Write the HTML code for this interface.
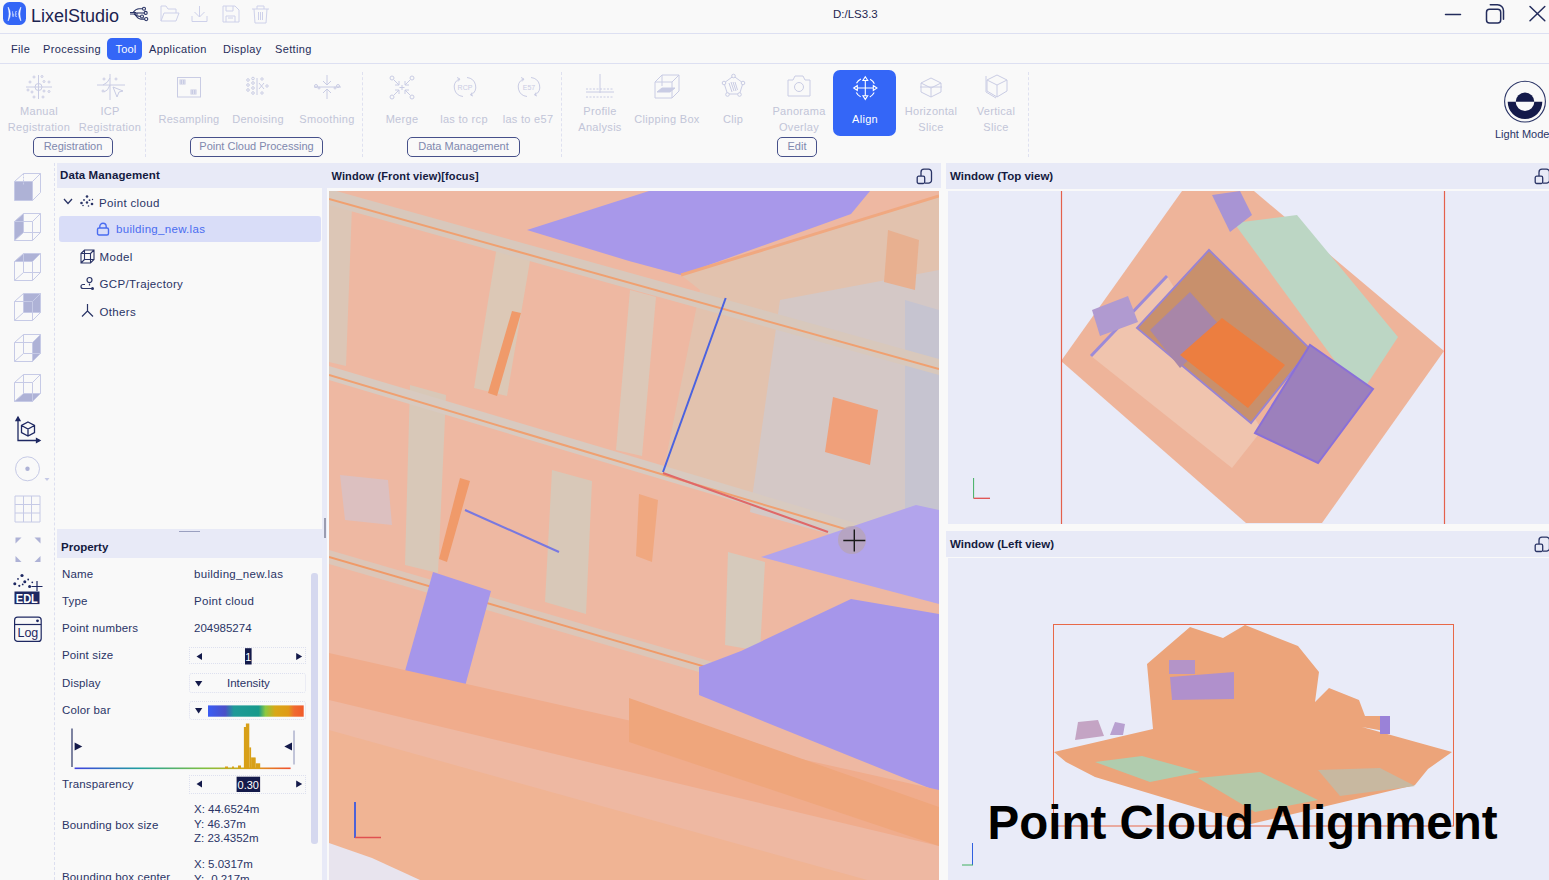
<!DOCTYPE html>
<html><head><meta charset="utf-8">
<style>
html,body{margin:0;padding:0}
body{width:1549px;height:880px;overflow:hidden;background:#f9f9f9;font-family:"Liberation Sans",sans-serif;position:relative;color:#1e2550}
.a{position:absolute;white-space:nowrap;line-height:1}
.dis{color:#c5c8da}
.btn{position:absolute;border:1.5px solid #46508a;border-radius:5px;box-sizing:border-box;font-size:11px;letter-spacing:0;line-height:17.2px;text-align:center;color:#8088ae}
.hdr{position:absolute;background:#e8eaf7}
.tb{position:absolute;font-size:11px;letter-spacing:0.3px;line-height:16px;text-align:center;color:#c2c5d8;white-space:nowrap}
svg{position:absolute;overflow:visible}
</style></head><body>

<!-- ===== Title bar ===== -->
<div class="a" style="left:2.5px;top:1.8px;width:23.6px;height:23.7px;background:#3466f6;border-radius:6.5px"></div>
<div class="a" style="left:31px;top:6.5px;font-size:18px;color:#1c2350">LixelStudio</div>
<div class="a" style="left:833px;top:9px;font-size:11.5px;color:#1e2550">D:/LS3.3</div>

<!-- dotted separators -->
<div class="a" style="left:0;top:33px;width:1549px;height:1px;background:#dde0f2"></div>
<div class="a" style="left:0;top:63px;width:1549px;height:1px;background:#dde0f2"></div>

<!-- ===== Menu ===== -->
<div class="a" style="left:107px;top:38px;width:35px;height:22px;background:#3466f7;border-radius:5px"></div>
<div class="a" style="left:11px;top:44.4px;font-size:11px;letter-spacing:0.35px;color:#262d5a">File</div>
<div class="a" style="left:43px;top:44.4px;font-size:11px;letter-spacing:0.35px;color:#262d5a">Processing</div>
<div class="a" style="left:115.5px;top:44.4px;font-size:11px;letter-spacing:0.2px;color:#fff">Tool</div>
<div class="a" style="left:149px;top:44.4px;font-size:11px;letter-spacing:0.35px;color:#262d5a">Application</div>
<div class="a" style="left:223px;top:44.4px;font-size:11px;letter-spacing:0.35px;color:#262d5a">Display</div>
<div class="a" style="left:275px;top:44.4px;font-size:11px;letter-spacing:0.35px;color:#262d5a">Setting</div>


<!-- logo mark -->
<svg style="left:0;top:0" width="30" height="28" viewBox="0 0 30 28">
<path d="M8.2 7.2Q12.4 14 8.2 20.8Q10.2 14 8.2 7.2z" fill="#fff" stroke="#fff" stroke-width="0.6"/>
<path d="M20.8 7.2Q16.6 14 20.8 20.8Q18.8 14 20.8 7.2z" fill="#fff" stroke="#fff" stroke-width="0.6"/>
<path d="M12.6 11.2v5.2M12.6 14h1.1v2.4h-1.1M15.6 11.6v4.8h1.4M15.6 11.6h1.4M15.6 14h1.2" stroke="#c8d8ff" stroke-width="0.8" fill="none"/>
</svg>
<!-- title bar tool icons -->
<svg style="left:129px;top:5px" width="22" height="20" viewBox="0 0 22 20">
<g stroke="#2a3466" stroke-width="1.1" fill="none">
<path d="M1 7.5h6M1 9h8"/><path d="M4 7.5Q7 3.8 10 3.8h3.5"/><path d="M5 8h10.2"/><path d="M5 9Q8 11.5 11.5 11.5"/><path d="M6 9.5Q9 14.1 12 14.1h3.7"/>
<circle cx="15" cy="3.8" r="1.5"/><circle cx="16.7" cy="7.9" r="1.5"/><circle cx="13" cy="11.5" r="1.5"/><circle cx="17.2" cy="14.1" r="1.6"/>
</g></svg>
<svg style="left:160px;top:5px" width="20" height="18" viewBox="0 0 20 18">
<g stroke="#ced1ea" stroke-width="1" fill="none">
<path d="M1 16V1h5l2 3h8v4"/><path d="M1 16l3-8h15l-3 8z"/>
</g></svg>
<svg style="left:191px;top:5px" width="17" height="18" viewBox="0 0 17 18">
<g stroke="#ced1ea" stroke-width="1" fill="none">
<path d="M8.5 1v11M3.5 7l5 5 5-5"/><path d="M1 11v5.5h15V11"/>
</g></svg>
<svg style="left:222px;top:5px" width="18" height="18" viewBox="0 0 18 18">
<g stroke="#ced1ea" stroke-width="1" fill="none">
<path d="M1 1h12l4 4v12H1z"/><path d="M4 1v5h7V1"/><path d="M4 17v-6h9v6"/><path d="M6 13h5"/>
</g></svg>
<svg style="left:251px;top:4px" width="19" height="20" viewBox="0 0 19 20">
<g stroke="#ced1ea" stroke-width="1" fill="none">
<path d="M1 5h17"/><path d="M6 5V2h7v3"/><path d="M3 5l1 14h11l1-14"/><path d="M7.5 8v8M9.5 8v8M11.5 8v8"/>
</g></svg>
<!-- window controls -->
<svg style="left:1440px;top:0" width="109" height="30" viewBox="0 0 109 30">
<g stroke="#232c5c" stroke-width="1.5" fill="none" stroke-linecap="round">
<path d="M5.5 14.4h15"/>
<rect x="46.5" y="9.2" width="14.2" height="13.8" rx="3"/>
<path d="M50.3 4.8h7.2a6 6 0 0 1 6 6v8.4"/>
<path d="M90 6.5l14.8 14.3M104.8 6.5L90 20.8"/>
</g></svg>


<!-- ===== Toolbar ===== -->
<!-- separators -->
<div class="a" style="left:145px;top:72px;width:0;height:85px;border-left:1px dashed #dfe1f0"></div>
<div class="a" style="left:362px;top:72px;width:0;height:85px;border-left:1px dashed #dfe1f0"></div>
<div class="a" style="left:561px;top:72px;width:0;height:85px;border-left:1px dashed #dfe1f0"></div>
<div class="a" style="left:1028px;top:72px;width:0;height:85px;border-left:1px dashed #dfe1f0"></div>

<!-- labels -->
<div class="tb" style="left:0;top:103px;width:78px">Manual<br>Registration</div>
<div class="tb" style="left:71px;top:103px;width:78px">ICP<br>Registration</div>
<div class="tb" style="left:149px;top:111px;width:80px">Resampling</div>
<div class="tb" style="left:218px;top:111px;width:80px">Denoising</div>
<div class="tb" style="left:287px;top:111px;width:80px">Smoothing</div>
<div class="tb" style="left:362px;top:111px;width:80px">Merge</div>
<div class="tb" style="left:424px;top:111px;width:80px">las to rcp</div>
<div class="tb" style="left:488px;top:111px;width:80px">las to e57</div>
<div class="tb" style="left:560px;top:103px;width:80px">Profile<br>Analysis</div>
<div class="tb" style="left:627px;top:111px;width:80px">Clipping Box</div>
<div class="tb" style="left:693px;top:111px;width:80px">Clip</div>
<div class="tb" style="left:759px;top:103px;width:80px">Panorama<br>Overlay</div>
<div class="a" style="left:833px;top:70px;width:63px;height:66px;background:#3466f7;border-radius:7px"></div>
<div class="tb" style="left:825px;top:111px;width:80px;color:#fff">Align</div>
<div class="tb" style="left:891px;top:103px;width:80px">Horizontal<br>Slice</div>
<div class="tb" style="left:956px;top:103px;width:80px">Vertical<br>Slice</div>

<!-- group buttons -->
<div class="btn" style="left:33px;top:137px;width:80px;height:19.5px">Registration</div>
<div class="btn" style="left:190px;top:137px;width:133px;height:19.5px">Point Cloud Processing</div>
<div class="btn" style="left:407px;top:137px;width:113px;height:19.5px">Data Management</div>
<div class="btn" style="left:777px;top:137px;width:40px;height:20px">Edit</div>

<!-- light mode -->
<svg style="left:1503px;top:80px" width="44" height="44" viewBox="0 0 44 44">
<circle cx="22" cy="21.6" r="20.4" stroke="#2a3466" stroke-width="1.1" fill="none"/>
<path d="M12.7 21.8a9.3 9.3 0 0 1 18.6 0z" fill="#141a4a"/>
<path d="M4.7 21.8h34.6a17.3 17.3 0 0 1 -34.6 0zM12.7 21.8a9.3 9.3 0 0 0 18.6 0z" fill="#141a4a" fill-rule="evenodd"/>
</svg>
<div class="a" style="left:1495px;top:129px;font-size:11px;color:#2a3466">Light Mode</div>

<!-- toolbar icons (disabled) -->
<svg style="left:25px;top:75px" width="28" height="24" viewBox="0 0 28 24">
<g stroke="#c9cce4" stroke-width="1" fill="none">
<path d="M13.5 0v24M1 12h26"/><circle cx="13.5" cy="12" r="3.5"/>
<circle cx="9" cy="2" r="1"/><circle cx="17" cy="1.5" r="1"/><circle cx="5" cy="7" r="1"/><circle cx="19" cy="6.5" r="1"/><circle cx="24" cy="7" r="1"/>
<circle cx="3" cy="15" r="1"/><circle cx="7" cy="17" r="1"/><circle cx="19" cy="16" r="1"/><circle cx="24" cy="16.5" r="1"/><circle cx="9" cy="22" r="1"/><circle cx="18" cy="22" r="1"/>
</g></svg>
<svg style="left:96px;top:74px" width="30" height="26" viewBox="0 0 30 26">
<g stroke="#c9cce4" stroke-width="1" fill="none">
<path d="M14 0v26M1 11h28"/><path d="M7 11 Q12 9 14 4M14 11 Q12 17 8 18"/>
<circle cx="8" cy="5" r="1"/><circle cx="20" cy="5" r="1"/><circle cx="7" cy="17" r="1"/>
<path d="M17 13l10 4-4 1 -2 5z"/>
</g></svg>
<svg style="left:177px;top:77px" width="24" height="21" viewBox="0 0 24 21">
<g stroke="#c9cce4" stroke-width="1" fill="none">
<rect x="0.5" y="0.5" width="23" height="19.5"/>
<rect x="3" y="3" width="5" height="4"/><path d="M4.5 3v4M6.5 3v4M3 5h5"/>
<rect x="14" y="13" width="5" height="4"/><path d="M15.5 13v4M17.5 13v4M14 15h5"/>
</g></svg>
<svg style="left:246px;top:77px" width="26" height="20" viewBox="0 0 26 20">
<g stroke="#c9cce4" stroke-width="1" fill="none">
<circle cx="2" cy="3" r="1.3"/><circle cx="2" cy="8" r="1.3"/><circle cx="2" cy="13" r="1.3"/>
<circle cx="7" cy="1.5" r="1.3"/><circle cx="7" cy="6" r="1.3"/><circle cx="7" cy="11" r="1.3"/><circle cx="7" cy="16" r="1.3"/>
<path d="M11 1v17"/><path d="M13 6l5 6M18 6l-5 6"/><circle cx="16" cy="2" r="1.2"/><circle cx="21" cy="9" r="1.2"/><circle cx="16" cy="16" r="1.2"/>
</g></svg>
<svg style="left:313px;top:75px" width="29" height="24" viewBox="0 0 29 24">
<g stroke="#c9cce4" stroke-width="1" fill="none">
<path d="M14 0v10M10 6l4 4 4-4"/><path d="M14 24v-10M10 18l4-4 4 4"/><path d="M1 12h27"/>
<circle cx="3" cy="11" r="1.5"/><circle cx="25" cy="11" r="1.5"/><circle cx="6" cy="13" r="1"/><circle cx="22" cy="13" r="1"/>
</g></svg>
<svg style="left:389px;top:75px" width="26" height="25" viewBox="0 0 26 25">
<g stroke="#c9cce4" stroke-width="1" fill="none">
<circle cx="3" cy="3" r="2"/><path d="M5 5l5 5M10 6v4H6"/>
<circle cx="23" cy="3" r="2"/><path d="M21 5l-5 5M16 6v4h4"/>
<circle cx="3" cy="22" r="2"/><path d="M5 20l5-5M6 15h4v4"/>
<circle cx="23" cy="22" r="2"/><path d="M21 20l-5-5M20 15h-4v4"/>
<path d="M13 10v5M10.5 12.5h5"/>
</g></svg>
<svg style="left:452px;top:76px" width="26" height="22" viewBox="0 0 26 22">
<g stroke="#c9cce4" stroke-width="1" fill="none">
<path d="M7 3 A10 9.5 0 0 0 11 20.5"/><path d="M15 1.5 A10 9.5 0 0 1 19 19"/>
<path d="M5 1.5l3 1.5-2 2.5M21 20l-2.5-1 1.5-2.5"/>
</g><text x="13" y="14" font-size="7" fill="#c9cce4" text-anchor="middle" font-family="Liberation Sans">RCP</text></svg>
<svg style="left:516px;top:76px" width="26" height="22" viewBox="0 0 26 22">
<g stroke="#c9cce4" stroke-width="1" fill="none">
<path d="M7 3 A10 9.5 0 0 0 11 20.5"/><path d="M15 1.5 A10 9.5 0 0 1 19 19"/>
<path d="M5 1.5l3 1.5-2 2.5M21 20l-2.5-1 1.5-2.5"/>
</g><text x="13" y="14" font-size="7" fill="#c9cce4" text-anchor="middle" font-family="Liberation Sans">E57</text></svg>
<svg style="left:586px;top:74px" width="28" height="26" viewBox="0 0 28 26">
<g stroke="#c9cce4" stroke-width="1" fill="none">
<path d="M14 0v19"/><path d="M0 15h28" stroke-dasharray="2 1.5"/><path d="M0 18h28"/><path d="M0 23h28" stroke-dasharray="2 1.5"/>
</g></svg>
<svg style="left:654px;top:74px" width="26" height="25" viewBox="0 0 26 25">
<g stroke="#c9cce4" stroke-width="1" fill="none">
<path d="M1 8L8 1h17v16l-7 7H1z"/><path d="M1 8h17v16M18 8l7-7"/><path d="M8 1v11"/>
<path d="M3 18l5-4h13l-5 4z" fill="#c9cce4"/>
</g></svg>
<svg style="left:721px;top:74px" width="25" height="24" viewBox="0 0 25 24">
<g stroke="#c9cce4" stroke-width="1" fill="none">
<path d="M12.5 2L22 9l-3.5 11h-12L3 9z"/>
<circle cx="12.5" cy="2" r="1.8" fill="#f9f9f9"/><circle cx="22" cy="9" r="1.8" fill="#f9f9f9"/><circle cx="18.5" cy="20.5" r="1.8" fill="#f9f9f9"/><circle cx="6.5" cy="20.5" r="1.8" fill="#f9f9f9"/><circle cx="3" cy="9" r="1.8" fill="#f9f9f9"/>
<path d="M8 9l3 9M10 8l3 9M12 8l3 9M14 8l2.5 8"/>
</g></svg>
<svg style="left:787px;top:75px" width="24" height="22" viewBox="0 0 24 22">
<g stroke="#c9cce4" stroke-width="1" fill="none">
<path d="M1 5h5l2-4h8l2 4h5v16H1z"/><circle cx="12" cy="12" r="4.5"/>
</g></svg>
<svg style="left:853px;top:75.5px" width="25" height="25" viewBox="0 0 25 25">
<g stroke="#fff" stroke-width="1.1" fill="none">
<path d="M12.3 4.5v15.2M4.3 12h15.8"/>
<path d="M12.3 0.8l2.4 3.7h-4.8zM12.3 23.4l2.4-3.7h-4.8zM0.7 12l3.6-2.4v4.8zM23.9 12l-3.6-2.4v4.8z"/>
<circle cx="12.3" cy="12" r="10" stroke-dasharray="6.2 9.5" stroke-dashoffset="-4.75"/>
</g></svg>
<svg style="left:919px;top:77px" width="24" height="21" viewBox="0 0 24 21">
<g stroke="#c9cce4" stroke-width="1" fill="none">
<path d="M12 1l10 5v9l-10 5-10-5V6z"/><path d="M2 6l10 5 10-5M12 11v9"/><path d="M1 10h22"/>
</g></svg>
<svg style="left:985px;top:74px" width="24" height="25" viewBox="0 0 24 25">
<g stroke="#c9cce4" stroke-width="1" fill="none">
<path d="M12 1l10 5v11l-10 6-10-6V6z"/><path d="M2 6l10 5 10-5M12 11v12"/><path d="M1 2v16l10 6"/>
</g></svg>


<!-- ===== Left sidebar ===== -->
<div class="a" style="left:54px;top:163px;width:0;height:717px;border-left:1px dashed #dcdff0"></div>
<svg style="left:14px;top:172.5px" width="28" height="470" viewBox="0 0 28 470">
<g stroke="#c6cae6" stroke-width="1" fill="none">
 <!-- cube 1 front -->
 <g transform="translate(0.5,0.5)"><path d="M0 8h18v19H0z" fill="#aeb2d6"/><path d="M9 0h17v19l-8 8M0 8l9-8M18 8l8-8"/><path d="M9 0v11" stroke-dasharray="2 1"/></g>
 <g transform="translate(0.5,40.5)"><path d="M0 8l9-8v19l-9 8z" fill="#aeb2d6"/><path d="M0 8h18v19H0zM9 0h17v19H9M18 8l8-8M18 27l8-8"/></g>
 <g transform="translate(0.5,80.5)"><path d="M0 8l9-8h17l-8 8z" fill="#aeb2d6"/><path d="M0 8h18v19H0zM26 0v19l-8 8M9 0v19H26M0 27l9-8"/></g>
 <g transform="translate(0.5,120.5)"><path d="M9 0h17v19H9z" fill="#aeb2d6"/><path d="M0 8h18v19H0zM0 8l9-8M18 8l8-8M18 27l8-8M0 27l9-8"/></g>
 <g transform="translate(0.5,161.5)"><path d="M18 8l8-8v19l-8 8z" fill="#aeb2d6"/><path d="M0 8h18v19H0zM0 8l9-8h17M9 0v19h17M0 27l9-8"/></g>
 <g transform="translate(0.5,201.5)"><path d="M0 27l9-8h17l-8 8z" fill="#aeb2d6"/><path d="M0 8h18v19H0zM0 8l9-8h17v19M18 8l8-8M9 0v19"/></g>
</g>
<!-- axis cube -->
<g stroke="#1e2862" stroke-width="1.3" fill="none">
 <path d="M4 244.5v23h21.5"/><path d="M2 247.5l2-3.5 2 3.5z" fill="#1e2862"/><path d="M22.5 265.5l3.5 2-3.5 2z" fill="#1e2862"/>
 <path d="M14 249l6.5 3.5v7l-6.5 3.5-6.5-3.5v-7z M7.5 252.5l6.5 3.5 6.5-3.5M14 256v7"/>
</g>
<!-- view circle -->
<g stroke="#c6cae6" stroke-width="1" fill="none"><circle cx="13.5" cy="295.8" r="12"/></g>
<circle cx="13.5" cy="295.8" r="2.2" fill="#aeb2d6"/>
<path d="M30.5 305h5l-2.5 3z" fill="#c6cae6"/>
<!-- grid -->
<g stroke="#c6cae6" stroke-width="1" fill="none"><path d="M1 323h25v26H1zM9.5 323v26M17.5 323v26M1 331.5h25M1 340h25"/></g>
<!-- corners -->
<g fill="#aeb2d6"><path d="M1.5 364.5h6l-6 6z"/><path d="M26.5 364.5h-6l6 6z"/><path d="M1.5 389h6l-6-6z"/><path d="M26.5 389h-6l6-6z"/></g>
<!-- EDL -->
<g fill="#1e2862">
 <circle cx="8" cy="402.5" r="1.6"/><circle cx="0.8" cy="410.7" r="1.5"/><circle cx="10.8" cy="408.7" r="1.5"/><circle cx="5.3" cy="412.8" r="1.1"/><circle cx="15.6" cy="413.5" r="1.5"/><circle cx="4" cy="405.9" r="0.9"/><circle cx="14.2" cy="406.5" r="0.9"/><circle cx="8.7" cy="411.4" r="0.9"/><circle cx="18.3" cy="409.3" r="0.9"/>
 <rect x="0.5" y="418.5" width="25" height="12.6"/>
</g>
<path d="M23 408v10M17.5 413.5h11" stroke="#1e2862" stroke-width="1.2"/>
<text x="12.8" y="429.8" font-size="12" font-weight="bold" fill="#fff" text-anchor="middle" font-family="Liberation Sans" textLength="22" lengthAdjust="spacingAndGlyphs">EDL</text>
<!-- Log -->
<g stroke="#1e2862" stroke-width="1.2" fill="none"><rect x="0.6" y="444.2" width="26.6" height="24.2" rx="3"/><path d="M0.6 451.5h26.6"/></g>
<circle cx="23.5" cy="447.8" r="1.4" fill="#1e2862"/>
<text x="13.9" y="464" font-size="12.5" fill="#1e2862" text-anchor="middle" font-family="Liberation Sans">Log</text>
</svg>

<!-- ===== Data management panel ===== -->
<div class="hdr" style="left:57px;top:163px;width:884px;height:25px"></div>
<div class="hdr" style="left:322px;top:163px;width:5px;height:717px"></div>
<div class="a" style="left:324px;top:518px;width:1.6px;height:20px;background:#9a9cb0"></div>
<div class="a" style="left:60px;top:169.5px;font-size:11.5px;letter-spacing:0.1px;font-weight:bold;color:#141a40">Data Management</div>
<div class="a" style="left:59px;top:216px;width:262px;height:26px;background:#d9ddf8;border-radius:3px"></div>
<svg style="left:63px;top:198px" width="10" height="7" viewBox="0 0 10 7"><path d="M1 1l4 4.5L9 1" stroke="#2a3466" stroke-width="1.3" fill="none"/></svg>
<svg style="left:80px;top:195px" width="15" height="12" viewBox="0 0 15 12" fill="#2a3466">
<circle cx="7" cy="1.5" r="1.3"/><circle cx="4" cy="5" r="0.9"/><circle cx="9.5" cy="5.2" r="0.9"/><circle cx="1.5" cy="8" r="1.3"/><circle cx="7" cy="7.5" r="1.2"/><circle cx="12" cy="9" r="1.3"/><circle cx="3" cy="10.5" r="0.8"/><circle cx="8.5" cy="11" r="0.8"/><circle cx="12.5" cy="4.5" r="0.7"/></svg>
<div class="a" style="left:99px;top:197.7px;font-size:11.5px;letter-spacing:0.35px;color:#2a3466">Point cloud</div>
<svg style="left:96px;top:222px" width="14" height="14" viewBox="0 0 14 14"><g stroke="#4a6cf0" stroke-width="1.4" fill="none"><rect x="1.5" y="6" width="11" height="7" rx="1.5"/><path d="M3.8 6V4.5a3.2 3.2 0 0 1 6.4 0V6"/></g></svg>
<div class="a" style="left:116px;top:224px;font-size:11.5px;letter-spacing:0.3px;color:#4a6cf0">building_new.las</div>
<svg style="left:80px;top:249px" width="15" height="15" viewBox="0 0 15 15"><g stroke="#2a3466" stroke-width="1.1" fill="none"><path d="M1 4.5l3.5-3.5h9.5v9.5l-3.5 3.5H1z M1 4.5h9.5v9.5M10.5 4.5l3.5-3.5M4.5 1v9.5h9.5M1 14l3.5-3.5"/></g></svg>
<div class="a" style="left:99.5px;top:251.8px;font-size:11.5px;letter-spacing:0.35px;color:#2a3466">Model</div>
<svg style="left:80px;top:276px" width="15" height="15" viewBox="0 0 15 15"><g stroke="#2a3466" stroke-width="1.2" fill="none"><circle cx="9.5" cy="4" r="2.5"/><path d="M9.5 7.5v2"/><path d="M5 8.5H3a2 2 0 0 0 0 4h9"/></g><circle cx="12.5" cy="12.5" r="1.5" fill="#2a3466"/></svg>
<div class="a" style="left:99.5px;top:279.3px;font-size:11.5px;letter-spacing:0.35px;color:#2a3466">GCP/Trajectory</div>
<svg style="left:81px;top:304px" width="14" height="13" viewBox="0 0 14 13"><g stroke="#2a3466" stroke-width="1.2" fill="none"><path d="M6.5 0v7L1 12.5M6.5 7l5.5 5.5"/></g></svg>
<div class="a" style="left:99.5px;top:306.8px;font-size:11.5px;letter-spacing:0.35px;color:#2a3466">Others</div>

<!-- ===== Property panel ===== -->
<div class="hdr" style="left:57px;top:528.5px;width:265px;height:29.5px"></div>
<div class="a" style="left:179px;top:530.5px;width:21px;height:1.5px;background:#9aa0c0"></div>
<div class="a" style="left:61px;top:541.5px;font-size:11.5px;font-weight:bold;color:#141a40">Property</div>
<div class="a" style="left:311px;top:573px;width:7px;height:271px;background:#d5d8ef;border-radius:3px"></div>
<div class="a" style="left:62px;top:568.5px;font-size:11.5px;letter-spacing:0.15px;color:#2a3466">Name</div>
<div class="a" style="left:194px;top:568.5px;font-size:11.5px;letter-spacing:0.3px;color:#2a3466">building_new.las</div>
<div class="a" style="left:62px;top:595.6px;font-size:11.5px;letter-spacing:0.15px;color:#2a3466">Type</div>
<div class="a" style="left:194px;top:595.6px;font-size:11.5px;letter-spacing:0.3px;color:#2a3466">Point cloud</div>
<div class="a" style="left:62px;top:622.7px;font-size:11.5px;letter-spacing:0.15px;color:#2a3466">Point numbers</div>
<div class="a" style="left:194px;top:622.7px;font-size:11.5px;letter-spacing:0;color:#2a3466">204985274</div>
<div class="a" style="left:62px;top:650.2px;font-size:11.5px;letter-spacing:0.15px;color:#2a3466">Point size</div>
<div class="a" style="left:62px;top:677.5px;font-size:11.5px;letter-spacing:0.15px;color:#2a3466">Display</div>
<div class="a" style="left:62px;top:704.8px;font-size:11.5px;letter-spacing:0.15px;color:#2a3466">Color bar</div>
<div class="a" style="left:62px;top:778.5px;font-size:11.5px;letter-spacing:0.15px;color:#2a3466">Transparency</div>
<div class="a" style="left:62px;top:819.6px;font-size:11.5px;letter-spacing:0.15px;color:#2a3466">Bounding box size</div>
<div class="a" style="left:62px;top:871.7px;font-size:11.5px;letter-spacing:0.15px;color:#2a3466">Bounding box center</div>
<div class="a" style="left:194px;top:804.2px;font-size:11.5px;letter-spacing:0;color:#2a3466">X: 44.6524m</div>
<div class="a" style="left:194px;top:818.5px;font-size:11.5px;letter-spacing:0;color:#2a3466">Y: 46.37m</div>
<div class="a" style="left:194px;top:833.2px;font-size:11.5px;letter-spacing:0;color:#2a3466">Z: 23.4352m</div>
<div class="a" style="left:194px;top:859.1px;font-size:11.5px;letter-spacing:0;color:#2a3466">X: 5.0317m</div>
<div class="a" style="left:194px;top:873.7px;font-size:11.5px;letter-spacing:0;color:#2a3466">Y: -0.217m</div>

<!-- spinners -->
<div class="a" style="left:189px;top:647px;width:117px;height:17px;border:1px dotted #dde0ef;box-sizing:border-box"></div>
<div class="a" style="left:189px;top:673px;width:117px;height:20px;border:1px dotted #dde0ef;box-sizing:border-box;border-radius:3px"></div>
<div class="a" style="left:189px;top:701px;width:117px;height:19px;border:1px dotted #dde0ef;box-sizing:border-box;border-radius:3px"></div>
<div class="a" style="left:189px;top:774.5px;width:117px;height:19px;border:1px dotted #dde0ef;box-sizing:border-box"></div>
<svg style="left:0;top:0" width="1" height="1" viewBox="0 0 1 1"></svg>
<svg style="left:189px;top:640px" width="120" height="160" viewBox="189 640 120 160">
<g fill="#141a4a">
<path d="M196.5 656.4l5.5-3.5v7z"/><path d="M302.2 656.4l-6-3.5v7z"/>
<rect x="245" y="648.2" width="6.6" height="16.3"/>
<path d="M195 681h7.3l-3.65 5.5z"/><path d="M195 708h7.3l-3.65 5.5z"/>
<path d="M196.5 784l5.5-3.5v7z"/><path d="M302.2 784l-6-3.5v7z"/>
<rect x="236.6" y="776.7" width="23.5" height="15.3"/>
</g>
<text x="248.3" y="661" font-size="11" fill="#fff" text-anchor="middle" font-family="Liberation Sans">1</text>
<text x="248.3" y="788.5" font-size="11" fill="#fff" text-anchor="middle" font-family="Liberation Sans">0.30</text>
<defs><linearGradient id="cb" x1="0" x2="1" y1="0" y2="0">
<stop offset="0" stop-color="#3a5cf4"/><stop offset="0.18" stop-color="#4a50c8"/><stop offset="0.27" stop-color="#1f9a98"/><stop offset="0.53" stop-color="#179a8c"/><stop offset="0.6" stop-color="#8cc840"/><stop offset="0.7" stop-color="#d8a818"/><stop offset="0.84" stop-color="#e09a18"/><stop offset="0.9" stop-color="#f06a30"/><stop offset="1" stop-color="#f05a2a"/>
</linearGradient></defs>
<rect x="208" y="705.4" width="95.7" height="11.3" fill="url(#cb)"/>
</svg>
<div class="a" style="left:227px;top:678px;font-size:11.5px;color:#2a3466">Intensity</div>
<!-- histogram -->
<svg style="left:60px;top:720px" width="250" height="55" viewBox="60 720 250 55">
<path d="M72 728.5v38.5" stroke="#2a3466" stroke-width="1.2"/><path d="M294 730.5v34" stroke="#8a90b8" stroke-width="1"/>
<path d="M74.6 742.5l7.7 4-7.7 4z" fill="#141a4a"/><path d="M292 742.5l-7.7 4 7.7 4z" fill="#141a4a"/>
<defs><linearGradient id="hb" x1="0" x2="1"><stop offset="0" stop-color="#4040e0"/><stop offset="0.3" stop-color="#20a0a0"/><stop offset="0.6" stop-color="#80c040"/><stop offset="0.8" stop-color="#d8a818"/><stop offset="1" stop-color="#f05030"/></linearGradient></defs>
<rect x="74.6" y="767.5" width="216" height="1.6" fill="url(#hb)"/>
<g fill="#d8a018"><path d="M243.9 769V727h2v-3.5h3.4v45.5z"/><path d="M249.3 769V747.4h1.8v21.6z"/><path d="M251.1 769V757.4h4.6v11.6z"/><path d="M255.7 769V763.3h4.5v5.7z"/>
<path d="M225 768.5v-2h3v2zM232 768.5v-2h2v2zM238 768.5v-3h3v3z"/></g>
</svg>


<!-- ===== Viewport headers ===== -->
<div class="hdr" style="left:946px;top:163px;width:603px;height:26px"></div>
<div class="hdr" style="left:946px;top:531px;width:603px;height:26px"></div>
<div class="a" style="left:331.5px;top:170.5px;font-size:11px;letter-spacing:0.12px;font-weight:bold;color:#141a40">Window (Front view)[focus]</div>
<div class="a" style="left:950px;top:170.5px;font-size:11.5px;font-weight:bold;color:#141a40">Window (Top view)</div>
<div class="a" style="left:950px;top:538.5px;font-size:11.5px;font-weight:bold;color:#141a40">Window (Left view)</div>
<svg style="left:916px;top:168px" width="17" height="17" viewBox="0 0 17 17"><g stroke="#2a3466" stroke-width="1.3" fill="none"><rect x="1.2" y="8.2" width="7.5" height="7.3" rx="1.5"/><path d="M8 1.2h4.5a3 3 0 0 1 3 3v8a3 3 0 0 1-3 3h-3.5M8 1.2a3 3 0 0 0-3 3v3.8"/></g></svg>
<svg style="left:1534px;top:168px" width="17" height="17" viewBox="0 0 17 17"><g stroke="#2a3466" stroke-width="1.3" fill="none"><rect x="1.2" y="8.2" width="7.5" height="7.3" rx="1.5"/><path d="M8 1.2h4.5a3 3 0 0 1 3 3v8a3 3 0 0 1-3 3h-3.5M8 1.2a3 3 0 0 0-3 3v3.8"/></g></svg>
<svg style="left:1534px;top:536px" width="17" height="17" viewBox="0 0 17 17"><g stroke="#2a3466" stroke-width="1.3" fill="none"><rect x="1.2" y="8.2" width="7.5" height="7.3" rx="1.5"/><path d="M8 1.2h4.5a3 3 0 0 1 3 3v8a3 3 0 0 1-3 3h-3.5M8 1.2a3 3 0 0 0-3 3v3.8"/></g></svg>

<!-- ===== Front view ===== -->
<svg style="left:329px;top:191px;overflow:hidden" width="610" height="689" viewBox="329 191 610 689">
<rect x="329" y="191" width="610" height="689" fill="#eeb8a2"/>
<!-- light upper-right facade -->
<path d="M681 275L939 196V520L851 540 663 473 700 290z" fill="#e2c2ae"/>
<path d="M780 300L939 270V520L851 540 750 512z" fill="#d4c8c6"/>
<path d="M905 300L939 310V525L905 520z" fill="#c6c4d0"/>
<path d="M888 230L919 240 915 290 884 282z" fill="#e8b090"/>
<!-- window -->
<path d="M833 397L878 410 870 465 825 452z" fill="#f0a07a"/>
<!-- light pillars -->
<path d="M329 200L352 206 346 366 329 362z" fill="#dcc6b6"/>
<path d="M498 240L532 249 507 396 474 388z" fill="#dcc8b6"/>
<path d="M630 290L656 297 642 456 616 450z" fill="#dcc8b8"/>
<path d="M410 385L446 395 438 573 405 565z" fill="#d8c8b8"/>
<path d="M552 470L592 481 586 614 545 602z" fill="#d8c8b8"/>
<path d="M728 552L765 562 760 651 725 645z" fill="#d6cabc"/>
<!-- left tree area -->
<path d="M340 475L388 480 392 525 345 520z" fill="#dcc0c0"/>
<!-- purple roof top -->
<path d="M527 230L649 191H870L851 214 681 275 629 261z" fill="#a898ea"/>
<path d="M681 275L939 196" stroke="#f0a880" stroke-width="3"/>
<!-- beams -->
<path d="M329 189L939 359V375L329 205z" fill="#d8c8bc"/>
<path d="M329 199L939 369" stroke="#f0a070" stroke-width="2"/>
<path d="M329 366L939 548V562L329 380z" fill="#d8cac0"/>
<path d="M329 375L939 557" stroke="#f0a070" stroke-width="2"/>
<path d="M329 550L939 728V742L329 564z" fill="#dcc6b8"/>
<path d="M329 557L939 735" stroke="#f09a68" stroke-width="2"/>
<!-- orange accents -->
<path d="M512 311L521 313 497 396 488 393z" fill="#f09a6a"/>
<path d="M460 478L470 481 447 562 439 559z" fill="#f09a6a"/>
<path d="M639 494L658 500 652 562 636 556z" fill="#f0a880"/>
<path d="M465 510L559 552" stroke="#7878e0" stroke-width="2"/>
<!-- purple lower right -->
<path d="M761 557L916 505 939 510V604z" fill="#b2a4ec"/>
<path d="M741 651L851 599 939 614V792L785 730 699 695 699 667z" fill="#a696ea"/>
<path d="M433 572L491 591 464 690 405 671z" fill="#a696ea"/>
<!-- lower orange bands -->
<path d="M329 653L939 790V846L329 700z" fill="#f0ac8c"/>
<path d="M629 698L939 807V846L629 742z" fill="#efa67c"/>
<path d="M329 786L485 838 485 848 329 800z" fill="#f0a070"/>
<path d="M329 730L939 900V880H329z" fill="#f0b494"/>
<!-- white bottom-left -->
<path d="M329 843L372 858 420 880H329z" fill="#e8e4ee"/>
<!-- lines -->
<path d="M725.7 298L663 472" stroke="#4a62e0" stroke-width="2"/>
<path d="M663 473L828 532" stroke="#e06868" stroke-width="2"/>
<!-- crosshair -->
<circle cx="852" cy="540" r="14" fill="#b8a4b0" opacity="0.7"/>
<path d="M854.3 529.5v22M843.3 540.5h22" stroke="#1a1a1a" stroke-width="1.4"/>
<!-- axis -->
<path d="M355 802v36" stroke="#3a5ae0" stroke-width="1.8"/><path d="M355 837.5h26" stroke="#e05050" stroke-width="1.5"/>
</svg>

<!-- ===== Top view ===== -->
<svg style="left:948px;top:191px;overflow:hidden" width="601" height="333" viewBox="948 191 601 333">
<rect x="948" y="191" width="601" height="333" fill="#e9ebf8"/>
<path d="M1061 361L1182 191H1254L1444 351 1322 523H1246z" fill="#eeb49a"/>
<path d="M1091 356L1167 276 1262 430 1232 468z" fill="#f0c4ae"/>
<path d="M1091 356L1167 276" stroke="#9c8ad8" stroke-width="3"/>
<path d="M1234 223L1297 215 1398 337 1360 395z" fill="#bcd6c4"/>
<path d="M1137 328L1209 250 1310 349 1251 423z" fill="#c8906c" stroke="#9a84d0" stroke-width="2"/>
<path d="M1150 330L1190 292 1222 328 1180 368z" fill="#a886a8"/>
<path d="M1180 355L1222 318 1285 365 1248 408z" fill="#ec7e40"/>
<path d="M1255 433L1310 345 1373 389 1318 463z" fill="#9c80bc" stroke="#8a70d8" stroke-width="2"/>
<path d="M1212 195L1240 191 1252 215 1230 232z" fill="#a894d4"/>
<path d="M1092 310L1128 296 1138 322 1100 336z" fill="#b09ad0"/>
<path d="M1061.5 191v333M1444.5 191v333" stroke="#e4604c" stroke-width="1.2"/>
<path d="M973.6 478v20.3" stroke="#40b060" stroke-width="1" fill="none"/><path d="M973.6 498.3h16.4" stroke="#e05050" stroke-width="1.3"/>
</svg>

<!-- ===== Left view ===== -->
<svg style="left:948px;top:558px;overflow:hidden" width="601" height="322" viewBox="948 558 601 322">
<rect x="948" y="558" width="601" height="322" fill="#e9ebf8"/>
<rect x="1053.5" y="624.5" width="400" height="201.5" fill="none" stroke="#e86848" stroke-width="1"/>
<path d="M1054 752L1153 729 1147 664 1190 627 1223 638 1245 625 1298 646 1319 672 1315 702 1329 688 1359 700 1365 716 1381 716 1390 732 1362 727 1452 752 1428 769 1415 785 1251 824 1095 777 1066 762z" fill="#eca47a"/>
<path d="M1075 740L1078 722 1098 720 1104 736z" fill="#c4a4c4"/>
<path d="M1110 735L1115 722 1125 724 1123 735z" fill="#b8a0d0"/>
<path d="M1095 762L1142 756 1200 772 1150 782z" fill="#b0ccae"/>
<path d="M1198 778L1260 772 1318 800 1255 812z" fill="#b4c8a8"/>
<path d="M1318 770L1380 768 1415 786 1340 796z" fill="#c8b8a0"/>
<path d="M1169 660L1195 660 1195 674 1169 674z" fill="#b494c8"/>
<path d="M1170 677L1234 672 1234 699 1172 700z" fill="#b090cc"/>
<path d="M1380 716L1390 716 1390 734 1380 734z" fill="#9a82d8"/>
<path d="M972.5 843v22" stroke="#3060e0" stroke-width="1" fill="none"/><path d="M962 865h11" stroke="#40b060" stroke-width="1"/>
</svg>

<!-- ===== Big overlay title ===== -->
<div class="a" style="left:987.5px;top:799px;font-size:47.5px;font-weight:bold;color:#000">Point Cloud Alignment</div>

</body></html>
